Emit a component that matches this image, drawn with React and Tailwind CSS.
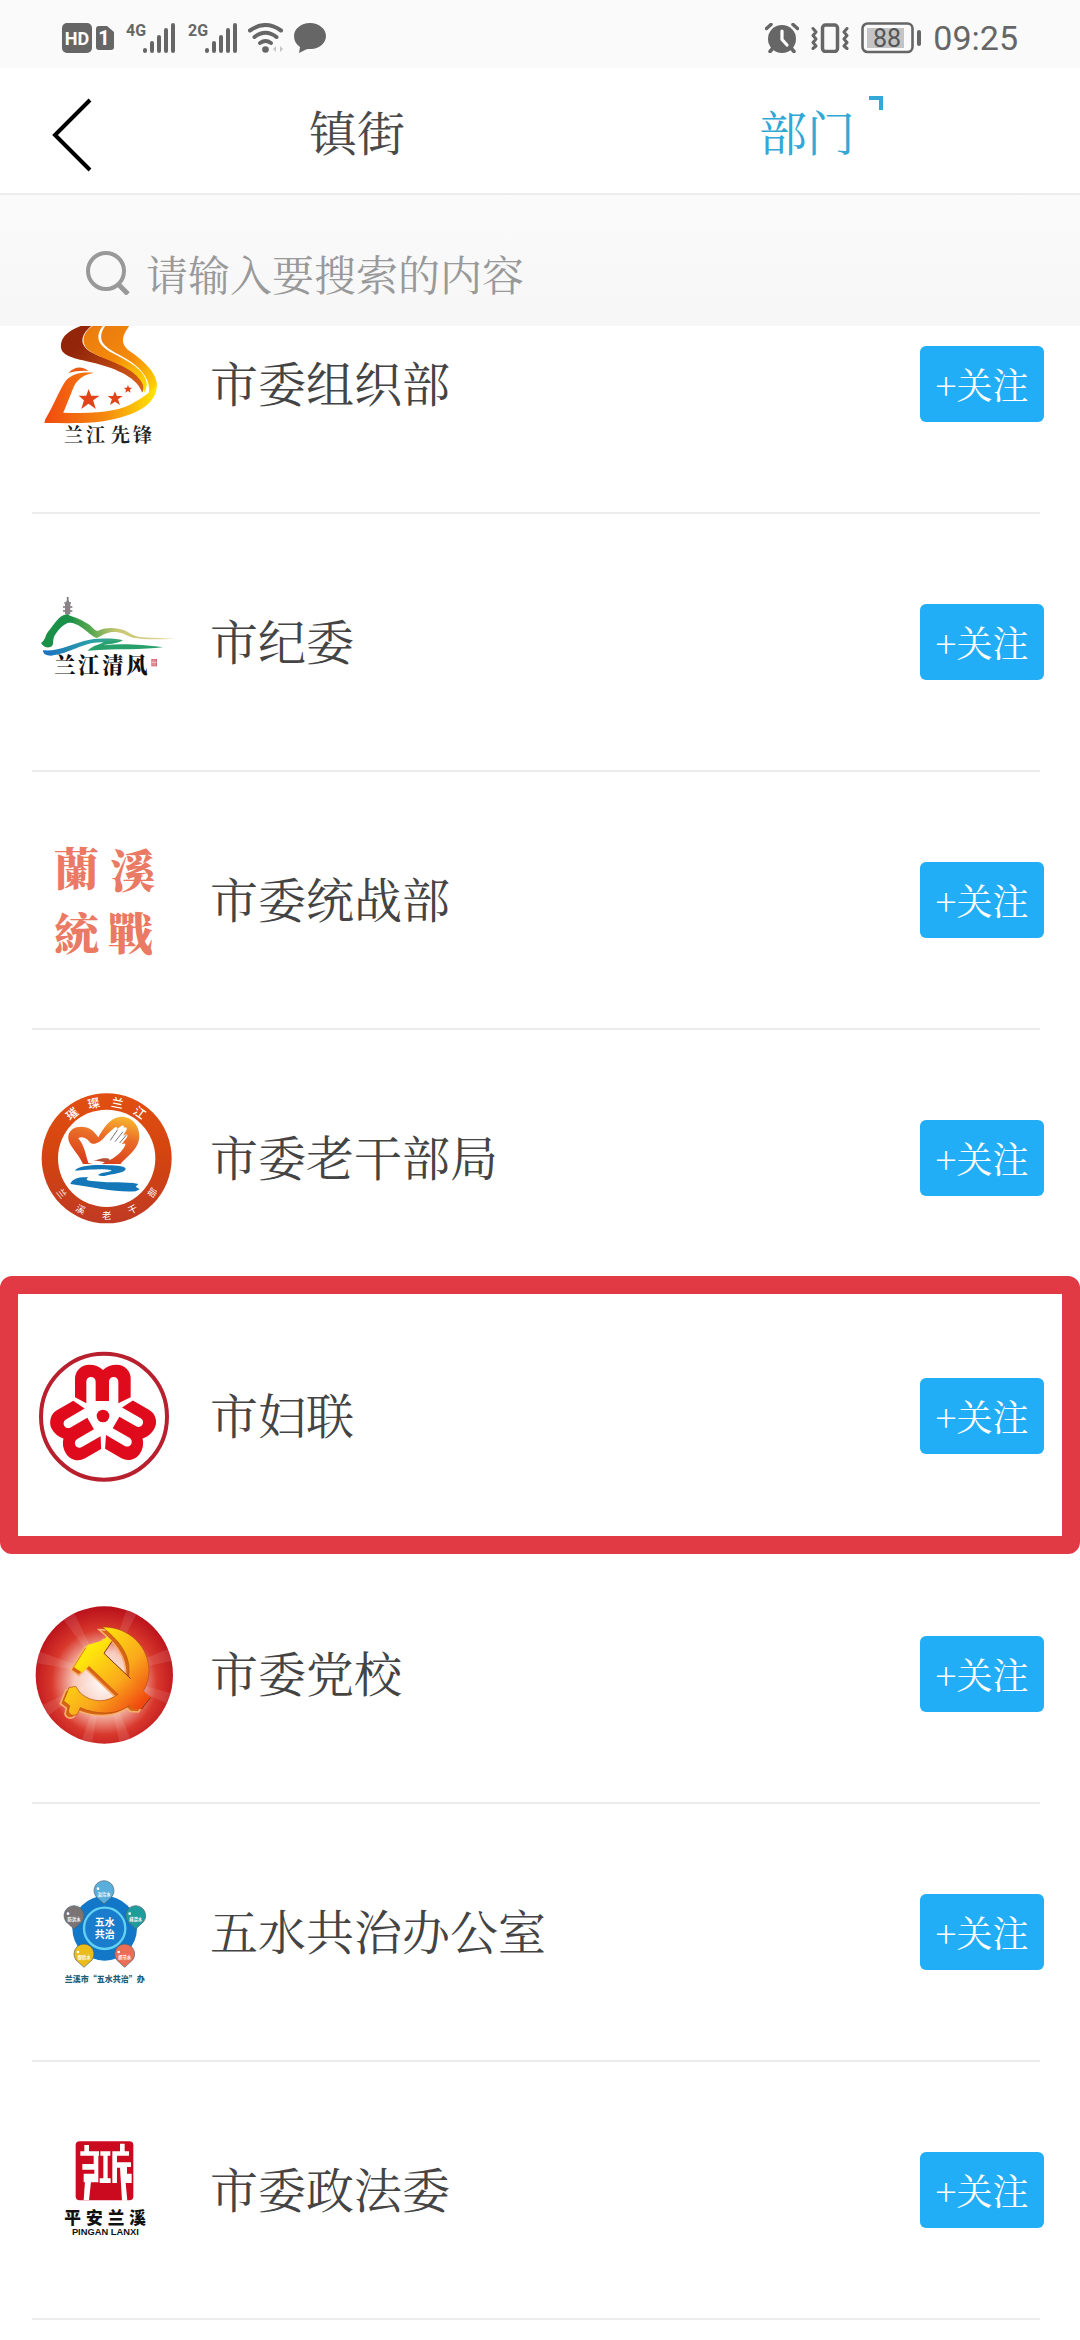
import React, { useState } from 'react';

const CJK = 'font-["Noto_Serif_CJK_SC","Noto_Sans_CJK_SC",sans-serif]';

/* ---------- Status bar icons ---------- */

function HdIcon() {
  return (
    <svg className="w-[30px] h-[30px]" viewBox="0 0 30 30">
      <rect width="30" height="30" rx="5" fill="#666" />
      <text x="15" y="22" textAnchor="middle" fontSize="18" fontWeight="700" fill="#fff" fontFamily="Roboto, sans-serif">
        HD
      </text>
    </svg>
  );
}

function SimIcon() {
  return (
    <svg className="w-[18px] h-[24px]" viewBox="0 0 18 24">
      <path d="M3 0h8l7 6v15a3 3 0 0 1-3 3H3a3 3 0 0 1-3-3V3a3 3 0 0 1 3-3z" fill="#666" />
      <text x="8" y="19" textAnchor="middle" fontSize="20" fontWeight="700" fill="#fff" fontFamily="Roboto, sans-serif">
        1
      </text>
    </svg>
  );
}

function Signal({ label }) {
  return (
    <svg className="w-[50px] h-9" viewBox="0 -3 50 36">
      <text x="0" y="13" fontSize="16" fontWeight="700" fill="#666" fontFamily='"Liberation Sans Narrow", Roboto, sans-serif'>
        {label}
      </text>
      <g stroke="#666" strokeWidth="4" strokeLinecap="round">
        <path d="M19 27v1M26 20v8M33 14v14M40 7v21M47 2v26" />
      </g>
    </svg>
  );
}

function WifiIcon() {
  return (
    <svg className="w-[36px] h-[30px]" viewBox="0 0 36 30">
      <g fill="none" stroke="#666" strokeWidth="4" strokeLinecap="round">
        <path d="M2 7.500q15.500-11 31 0" />
        <path d="M6.500 14q11-8.500 22 0" />
        <path d="M12 20q5.500-4 11 0" />
      </g>
      <circle cx="17.500" cy="26.500" r="3.300" fill="#666" />
      <path d="M28 23l-3 3 3 3zM32 23l3 3-3 3z" fill="#c4c4c4" />
    </svg>
  );
}

function ChatIcon() {
  return (
    <svg className="w-[32px] h-[30px]" viewBox="0 0 32 30">
      <path d="M16 0c9 0 16 6 16 13s-7 13-15 13c-2 0-4 0-5 .5L5 30l1-6C2 21.500 0 17.500 0 13 0 6 7 0 16 0z" fill="#666" />
    </svg>
  );
}

function AlarmIcon() {
  return (
    <svg className="w-[34px] h-[30px]" viewBox="0 0 34 30">
      <circle cx="17" cy="16" r="14" fill="#666" />
      <path d="M1.500 5.500l4.500-4M32.500 5.500l-4.500-4M5 28.500l3.500-4M29 28.500l-3.500-4" stroke="#666" strokeWidth="3.500" strokeLinecap="round" />
      <path d="M17 8v8.500l5 5.500" fill="none" stroke="#fff" strokeWidth="3.200" strokeLinecap="round" />
    </svg>
  );
}

function VibrateIcon() {
  return (
    <svg className="w-[38px] h-[30px]" viewBox="0 0 38 30" fill="none" stroke="#666" strokeLinecap="round" strokeLinejoin="round">
      <rect x="11.500" y="2" width="15" height="26.500" rx="3" strokeWidth="3.500" />
      <path d="M2 5.500l3 3.500-3 3.500 3 3.500-3 3.500 3 3.500-3 2.500M36 5.500L33 9l3 3.500-3 3.500 3 3.500-3 3.500 3 2.500" strokeWidth="3" />
    </svg>
  );
}

function BatteryIcon() {
  return (
    <svg className="w-[60px] h-[32px]" viewBox="0 0 60 32">
      <rect x="1.500" y="1.500" width="50" height="28.500" rx="5" fill="none" stroke="#666" strokeWidth="2.600" />
      <rect x="6" y="6" width="37" height="20" fill="#c4c4c4" />
      <rect x="56" y="8" width="4" height="16" rx="2" fill="#666" />
      <text x="26" y="25" textAnchor="middle" fontSize="25" fill="#555" fontFamily="Roboto, sans-serif">
        88
      </text>
    </svg>
  );
}

/* ---------- Department logos ---------- */

const logoClass = 'w-36 h-36 shrink-0';
const logoFont = '"Noto Sans CJK SC", sans-serif';
const brushFont = '"Noto Serif CJK SC", "Noto Sans CJK SC", serif';

function PioneerLogo() {
  return (
    <svg className={logoClass} viewBox="0 0 144 144">
      <defs>
        <linearGradient id="ribbon" x1="0" y1="0" x2="1" y2="1">
          <stop offset="0" stopColor="#e87a10" />
          <stop offset="0.500" stopColor="#f58a0a" />
          <stop offset="1" stopColor="#ffe600" />
        </linearGradient>
        <linearGradient id="ribbonDark" x1="0" y1="0" x2="1" y2="1">
          <stop offset="0.300" stopColor="#93260a" />
          <stop offset="1" stopColor="#e0641a" />
        </linearGradient>
        <linearGradient id="boat" x1="0" y1="0" x2="1" y2="0">
          <stop offset="0" stopColor="#f04a10" />
          <stop offset="0.550" stopColor="#f58a10" />
          <stop offset="1" stopColor="#ffe600" />
        </linearGradient>
      </defs>
      <g transform="translate(-33 -123) scale(0.3827 0.3333)">
        <path d="M262 395C185 415 160 440 162 475c2 30 45 35 90 48 60 18 110 45 122 88 14-25-8-55-45-78-40-25-95-35-108-65-10-25 8-55 45-73z" fill="url(#ribbonDark)" />
        <path d="M262 400c-35 18-48 45-38 70 14 30 75 42 115 72 30 22 42 45 40 70 16-28 4-56-25-82-35-30-75-40-90-68-10-20-2-45 18-62z" fill="url(#ribbon)" />
        <path d="M292 395l48 16c-22 35-22 58 5 78 50 40 75 80 66 115-5 20-15 32-28 38 18-38 10-72-18-105-30-35-80-48-95-78-8-20 0-45 22-64z" fill="url(#ribbon)" />
        <path d="M411 590c2 60-62 96-160 110-50 4-90 2-132 2 0-6 2-12 5-17 18-34 34-84 52-112 18-20 42-24 72-22-34 8-48 26-56 52l-24 68c90 4 150-3 190-34 14-10 32-22 53-47z" fill="url(#boat)" />
        <path d="M182 552c14-20 36-22 52-6-18-2-34 0-52 6z" fill="#e85a14" />
        <path d="M234 600l7 20h22l-17 14 7 26-19-16-19 16 7-26-14-14h20z" fill="#e04418" />
        <path d="M303 607l5 14h15l-12 10 5 17-13-10-13 10 5-17-11-10h14z" fill="#e04418" />
        <path d="M337 588l3 8h8l-6 6 2 9-7-5-7 5 2-9-6-6h8z" fill="#e04418" />
      </g>
      <text x="32 54 79 101" y="130" fontSize="19" fontWeight="700" fill="#222" fontFamily={brushFont}>
        兰江先锋
      </text>
    </svg>
  );
}

function CleanWindLogo() {
  return (
    <svg className={logoClass} viewBox="39 3 432 432">
      <defs>
        <linearGradient id="hill" x1="0" y1="0" x2="1" y2="0">
          <stop offset="0" stopColor="#1a9048" />
          <stop offset="0.220" stopColor="#5aa850" />
          <stop offset="0.450" stopColor="#c6c670" />
          <stop offset="1" stopColor="#e8d8a0" />
        </linearGradient>
        <linearGradient id="river" x1="0" y1="0" x2="1" y2="0">
          <stop offset="0" stopColor="#1c6fc0" />
          <stop offset="0.600" stopColor="#2aa0a8" />
          <stop offset="1" stopColor="#3aa868" />
        </linearGradient>
      </defs>
      <path d="M146 84v54M136 102h20M132 114h28M132 126h28" stroke="#777" strokeWidth="5" />
      <path d="M138 136v-32l8-14 8 14v32z" fill="#8a8088" />
      {/* Ridge running from the pagoda down to the right */}
      <path d="M148 140c26 4 46 16 64 28 10 8 14 16 24 18 16-10 44-12 66-6 24 4 34 20 60 24 30 2 60 3 104 5-44 3-94 3-120-2-20-4-32-16-54-18-22-2-38 6-58 18-24-6-42-42-86-47z" fill="url(#hill)" />
      <path d="M66 222c18-14 10-24 26-40 16-18 26-42 52-46 12 4 18 10 20 22-30 2-44 22-56 40-10 14 0 32-14 36-12 4-22-2-28-12z" fill="#1a9048" />
      <path d="M72 244c50 4 90-22 140-32 40-5 80-4 100 2-14 8-30 10-46 12l-18-6c-60 0-92 34-152 40-16 0-24-6-24-16z" fill="url(#river)" />
      <path d="M206 245c14-14 32-18 52-26l50-4c-14 6-42 9-54 14 60-6 110-2 178 6-60 8-134 4-226 10z" fill="#28a06c" />
      <text x="106 176 250 322" y="313" fontSize="64" fontWeight="900" fill="#111" fontFamily={brushFont}>
        兰江清风
      </text>
      <rect x="397" y="270" width="17" height="22" fill="#d06a70" />
      <path d="M402 272v18M408 272v18M398 280h15" stroke="#fff" strokeWidth="1.500" />
    </svg>
  );
}

function UnitedFrontLogo() {
  return (
    <svg className={logoClass} viewBox="39 27 432 432">
      <g fontSize="136" fontWeight="900" fill="#ea7a64" fontFamily={brushFont}>
        <text x="104" y="202">蘭</text>
        <text x="274" y="206">溪</text>
        <text x="104" y="396">統</text>
        <text x="266" y="396">戰</text>
      </g>
    </svg>
  );
}

function VeteranLogo() {
  // Characters set around the ring, with their angle from the top
  const upper = [['璀', -38], ['璨', -13], ['兰', 11], ['江', 36]];
  const lower = [['兰', 52], ['溪', 27], ['老', 0], ['干', -27], ['部', -53]];
  return (
    <svg className={logoClass} viewBox="39 51 432 432">
      <defs>
        <linearGradient id="ring" x1="0" y1="0" x2="0" y2="1">
          <stop offset="0" stopColor="#e24f12" />
          <stop offset="0.500" stopColor="#d2440f" />
          <stop offset="1" stopColor="#c03a24" />
        </linearGradient>
        <linearGradient id="heart" x1="0.800" y1="0" x2="0.500" y2="1">
          <stop offset="0" stopColor="#f8b830" />
          <stop offset="0.450" stopColor="#ea6c28" />
          <stop offset="1" stopColor="#d8401c" />
        </linearGradient>
      </defs>
      <circle cx="263" cy="268" r="195" fill="url(#ring)" />
      <circle cx="263" cy="268" r="146" fill="#fff" />
      <path d="M192 285c-14-34-48-58-44-84 4-28 44-36 70-18 8 6 14 14 20 22 14-26 34-58 66-62 34-2 58 26 57 60-2 40-42 62-56 82z" fill="url(#heart)" />
      <path d="M178 208c8-6 20-2 28 4 8 10 14 14 22 12 16-4 24-14 34-26l24-22c6-4 10-2 8 4l14-10c6-2 8 2 6 6 8-4 12 0 8 8l-10 16c12-8 18-2 10 8l-14 18c12-6 14-2 8 8-10 16-22 28-42 38-14 6-22 8-30 18l-36-8c-8-24-12-54-30-74z" fill="#fff" />
      <path d="M274 214l22-32M288 218l24-30M302 222l20-24" stroke="#777" strokeWidth="3" />
      <path d="M222 274c16 0 22-8 42-6 12 2 10 8-4 12z" fill="#b85038" />
      <path d="M168 305c10-16 60-18 96-16 34 0 58 4 56 12-4 12-40 14-64 20-20 0-24-2-10-8 16-4 36-6 30-10-20-6-80 0-108 2z" fill="#1478b8" />
      <path d="M154 345c6-18 30-22 54-20-10 8-6 10 20 12 50 6 90 0 130 8l-8 8 12 8-12 6c-60 4-120-12-196-22z" fill="#1478b8" />
      <g fontSize="36" fontWeight="500" fill="#fff" textAnchor="middle" fontFamily={logoFont}>
        {upper.map(([char, angle]) => (
          <text key={angle} x="263" y="112" transform={`rotate(${angle} 263 268)`}>{char}</text>
        ))}
      </g>
      <g fontSize="28" fill="#fff" textAnchor="middle" fontFamily={logoFont}>
        {lower.map(([char, angle]) => (
          <text key={angle} x="263" y="450" transform={`rotate(${angle} 263 268)`}>{char}</text>
        ))}
      </g>
    </svg>
  );
}

function WomenLogo() {
  const petal =
    'M228 385V328a42 42 0 0 1 42-41q26 0 42 16q16-16 42-16a42 42 0 0 1 41 41V385L358 403V338a14 14 0 0 0-28 0V396H290V338a14 14 0 0 0-28 0V403z';
  return (
    <svg className={logoClass} viewBox="99 225 432 432">
      <circle cx="315" cy="443" r="189" fill="#fff" stroke="#b8202e" strokeWidth="12" />
      <g fill="#df0b1c">
        <path d={petal} />
        <path d={petal} transform="rotate(120 312 440)" />
        <path d={petal} transform="rotate(240 312 440)" />
        <circle cx="312" cy="441" r="19" />
      </g>
    </svg>
  );
}

function PartyLogo() {
  const hammer = 'M165 235l42-68 42-12 14-12 16 14-24 36 140 132-27 36-24-2-134-128-20 20z';
  const sickle =
    'M250 114c80-2 140 60 140 130 0 70-60 128-130 128-28 0-54-6-76-16l-8 18c-12 10-26 4-28-8l4-16-18-14 16-40 20-4 14 20c20 18 46 26 72 22 44-8 72-44 74-84 2-58-32-96-80-136z';
  return (
    <svg className={logoClass} viewBox="39 39 432 432">
      <defs>
        <radialGradient id="glow" cx="0.500" cy="0.550" r="0.550">
          <stop offset="0" stopColor="#fff" />
          <stop offset="0.400" stopColor="#f8c8b8" />
          <stop offset="0.700" stopColor="#d8382c" />
          <stop offset="1" stopColor="#b8101a" />
        </radialGradient>
        <linearGradient id="gold" x1="0" y1="0" x2="1" y2="1">
          <stop offset="0.200" stopColor="#ffe80c" />
          <stop offset="0.600" stopColor="#faa81c" />
          <stop offset="0.900" stopColor="#f04a10" />
        </linearGradient>
        <clipPath id="disc">
          <circle cx="256" cy="258" r="206" />
        </clipPath>
      </defs>
      <circle cx="256" cy="258" r="206" fill="url(#glow)" />
      <g clipPath="url(#disc)" fill="#fff" opacity="0.100">
        <path d="M256 258L40 180v40zM256 258L110 60l40-20zM256 258L330 40l34 14zM256 258l220-90v44zM256 258l220 60v40zM256 258l90 220h-40zM256 258l-40 220h-36zM256 258L60 400l-14-40z" />
      </g>
      <g fill="#d86414" stroke="#f8b070" strokeWidth="5" transform="translate(-10 8)">
        <path d={sickle} />
        <path d={hammer} />
      </g>
      <path d={sickle} fill="url(#gold)" stroke="#b04a10" strokeWidth="2" />
      <path d={hammer} fill="url(#gold)" />
      <path d="M279 157l-24 36 80 76M367 361l28-36" fill="none" stroke="#8a3208" strokeWidth="3" />
    </svg>
  );
}

function WaterLogo() {
  const pins = [
    { x: 255, y: 97, color: '#5aaedb', label: '治污水' },
    { x: 165, y: 172, color: '#7a7474', label: '防洪水' },
    { x: 350, y: 172, color: '#1f9c9c', label: '排涝水' },
    { x: 195, y: 287, color: '#ecbc18', label: '保供水' },
    { x: 317, y: 287, color: '#ea6e56', label: '抓节水' },
  ];
  return (
    <svg className={logoClass} viewBox="39 3 432 432">
      <circle cx="257" cy="208" r="97" fill="#1277c6" />
      <circle cx="257" cy="208" r="62" fill="#1a7ccc" stroke="#62d2f2" strokeWidth="7" />
      <g fontSize="30" fontWeight="700" fill="#fff" textAnchor="middle" fontFamily={logoFont}>
        <text x="257" y="202">五水</text>
        <text x="257" y="236">共治</text>
      </g>
      {pins.map(({ x, y, color, label }) => (
        <g key={label}>
          <path d={`M${x} ${y + 38}l-24-22a30 30 0 1 1 48 0z`} fill={color} stroke="#49616e" strokeWidth="2" />
          <circle cx={x - 18} cy={y - 8} r="4" fill="#fff" />
          <text x={x} y={y + 14} fontSize="13" fontWeight="700" fill="#fff" textAnchor="middle" fontFamily={logoFont}>
            {label}
          </text>
        </g>
      ))}
      <text x="257" y="370" fontSize="24" fontWeight="900" fill="#1d6078" textAnchor="middle" fontFamily={logoFont}>
        兰溪市“五水共治”办
      </text>
    </svg>
  );
}

function SafeLanxiLogo() {
  return (
    <svg className={logoClass} viewBox="39 -3 432 432">
      <rect x="170" y="67" width="173" height="177" rx="12" fill="#cb0a20" />
      <g fill="#fff">
        <path d="M196 78h14v19h30v13h-56v-13h12z" />
        <path d="M224 104h14v86h-44v-26h32v-12h-36v-17h34z" />
        <path d="M198 188h18l-6 55h-16z" />
        <path d="M244 97h30v13h-8v68h9v14h-33v-14h11v-68h-9z" />
        <path d="M303 74h14v23h13v13h-36v82h-14V97h23z" />
        <path d="M292 130h44v14h-12v20h14v28h-18l5 53h-16l-6-99h-11z" />
      </g>
      <g fill="#111" fontWeight="900">
        <text x="136 201 266 331" y="314" fontSize="50" fontFamily={logoFont}>
          平安兰溪
        </text>
        <text x="259" y="347" fontSize="28" fontWeight="700" textAnchor="middle" fontFamily='"Liberation Sans", sans-serif'>
          PINGAN LANXI
        </text>
      </g>
    </svg>
  );
}

const departments = [
  { name: '市委组织部', Logo: PioneerLogo },
  { name: '市纪委', Logo: CleanWindLogo },
  { name: '市委统战部', Logo: UnitedFrontLogo },
  { name: '市委老干部局', Logo: VeteranLogo },
  { name: '市妇联', Logo: WomenLogo, highlighted: true },
  { name: '市委党校', Logo: PartyLogo },
  { name: '五水共治办公室', Logo: WaterLogo },
  { name: '市委政法委', Logo: SafeLanxiLogo },
];

function StatusBar() {
  return (
    <div className="flex items-center justify-between bg-[#fafafa] pt-5 pb-3 pl-[62px] pr-[62px]">
      <div className="flex h-9 items-center">
        <HdIcon />
        <div className="ml-1 flex">
          <SimIcon />
        </div>
        <div className="ml-3 flex gap-3">
          <Signal label="4G" />
          <Signal label="2G" />
        </div>
        <div className="ml-2.5 flex gap-2.5">
          <WifiIcon />
          <ChatIcon />
        </div>
      </div>
      <div className="flex h-9 items-center gap-3">
        <AlarmIcon />
        <VibrateIcon />
        <BatteryIcon />
        <span className='font-["Roboto",sans-serif] text-[34px] leading-9 text-[#666]'>09:25</span>
      </div>
    </div>
  );
}

function TabBar({ tab, setTab }) {
  const active = 'text-[#32a8d4]';
  const idle = 'text-[#4a4a4a]';
  return (
    <nav className="flex h-[127px] items-center border-b-2 border-[#ececec] bg-white pr-12">
      <button type="button" aria-label="返回" className="flex w-[132px] shrink-0 pt-2 pl-[52px]">
        <svg className="h-[74px] w-10" viewBox="0 0 40 74" fill="none" stroke="#000" strokeWidth="4">
          <path d="M38 2L3 37l35 35" />
        </svg>
      </button>
      <button type="button" onClick={() => setTab('town')} className={`flex-1 text-[48px] leading-[60px] ${tab === 'town' ? active : idle}`}>
        镇街
      </button>
      <button type="button" onClick={() => setTab('dept')} className={`flex-1 text-[48px] leading-[60px] ${tab === 'dept' ? active : idle}`}>
        <span className="relative">
          部门
          <svg className="absolute -right-7 top-0 h-3.5 w-3.5" viewBox="0 0 14 14" fill="none" stroke="#32a8d4" strokeWidth="4">
            <path d="M0 2h12v12" />
          </svg>
        </span>
      </button>
    </nav>
  );
}

function SearchBar({ value, onChange }) {
  return (
    <label className="flex h-[131px] items-center gap-4 bg-linear-to-b from-[#fafafa] to-[#f7f7f8] pt-6 pl-[86px] pr-9">
      <svg className="h-11 w-11 shrink-0" viewBox="0 0 44 44" fill="none" stroke="#999" strokeWidth="4">
        <circle cx="20" cy="20" r="18" />
        <path d="M32 33l10 10" strokeWidth="5" />
      </svg>
      <input
        type="text"
        aria-label="搜索"
        value={value}
        onChange={(e) => onChange(e.target.value)}
        placeholder="请输入要搜索的内容"
        className="min-w-0 flex-1 bg-transparent text-[42px] leading-[60px] text-[#444] outline-none placeholder:text-[#999]"
      />
    </label>
  );
}

function DepartmentRow({ name, Logo, highlighted }) {
  return (
    <li className="relative">
      <div className="ml-8 mr-10 flex h-[258px] items-center border-b-2 border-[#ececec]">
        <Logo />
        <span className="ml-[34px] flex-1 pb-1 text-[48px] leading-[60px] text-[#444]">{name}</span>
        <button type="button" className="-mr-1 h-[76px] w-[124px] shrink-0 rounded-md bg-[#22aef6] text-[36px] leading-[76px] text-white">
          +关注
        </button>
      </div>
      {highlighted && (
        <div className="pointer-events-none absolute inset-x-0 -top-3 -bottom-2 z-10 rounded-xl border-[18px] border-[#e23a44]" />
      )}
    </li>
  );
}

export default function App() {
  const [tab, setTab] = useState('dept');
  const [query, setQuery] = useState('');

  const visible = departments.filter(({ name }) => name.includes(query));

  return (
    <div className={`min-h-screen w-full bg-white ${CJK}`}>
      <header className="sticky top-0 z-20">
        <StatusBar />
        <TabBar tab={tab} setTab={setTab} />
        <SearchBar value={query} onChange={setQuery} />
      </header>

      {/* The list is scrolled a little way under the search bar */}
      <ul className="-mt-[70px]">
        {visible.map((dept) => (
          <DepartmentRow key={dept.name} {...dept} />
        ))}
      </ul>
    </div>
  );
}
